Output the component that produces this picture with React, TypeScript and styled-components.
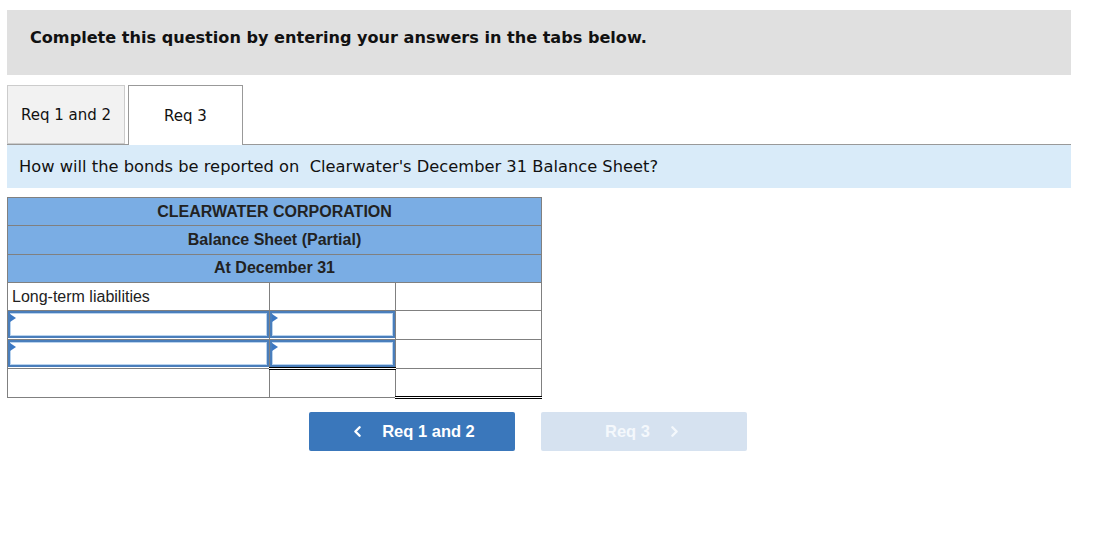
import styled, { createGlobalStyle } from "styled-components";
import { ChevronLeft, ChevronRight } from "lucide-react";

const GlobalStyle = createGlobalStyle`
  body {
    margin: 0;
    background: #fff;
    font-family: "DejaVu Sans", Verdana, sans-serif;
  }
`;

interface activeProps {
  active?: boolean;
}

const tabs = ["Req 1 and 2", "Req 3"];

export default function App() {
  return (
    <>
      <GlobalStyle />
      <Page>
        <Instructions>
          Complete this question by entering your answers in the tabs below.
        </Instructions>
        <TabBar>
          {tabs.map((tab) => (
            <Tab key={tab} active={tab === "Req 3"}>
              {tab}
            </Tab>
          ))}
        </TabBar>
        <Prompt>
          How will the bonds be reported on&nbsp; Clearwater's December 31 Balance Sheet?
        </Prompt>
        <Sheet>
          <colgroup>
            <col style={{ width: 262 }} />
            <col style={{ width: 126 }} />
            <col style={{ width: 146 }} />
          </colgroup>
          <tbody>
            <tr>
              <HeadCell colSpan={3}>CLEARWATER CORPORATION</HeadCell>
            </tr>
            <tr>
              <HeadCell colSpan={3}>Balance Sheet (Partial)</HeadCell>
            </tr>
            <tr>
              <HeadCell colSpan={3}>At December 31</HeadCell>
            </tr>
            <tr>
              <Cell>Long-term liabilities</Cell>
              <Cell />
              <Cell />
            </tr>
            <tr>
              <Cell>
                <InputBox />
              </Cell>
              <Cell>
                <InputBox />
              </Cell>
              <Cell />
            </tr>
            <tr>
              <Cell>
                <InputBox />
              </Cell>
              <Cell total>
                <InputBox />
              </Cell>
              <Cell />
            </tr>
            <tr>
              <Cell />
              <Cell />
              <Cell total />
            </tr>
          </tbody>
        </Sheet>
        <NavRow>
          <NavButton>
            <ChevronLeft size={17} strokeWidth={3.4} />
            <span>Req 1 and 2</span>
          </NavButton>
          <NavButton disabled>
            <span>Req 3</span>
            <ChevronRight size={17} strokeWidth={3.4} />
          </NavButton>
        </NavRow>
      </Page>
    </>
  );
}

const Page = styled.div`
  padding: 10px 31px 40px 7px;
`;

const Instructions = styled.div`
  box-sizing: border-box;
  background: #e0e0e0;
  height: 65px;
  display: flex;
  align-items: center;
  padding: 0 0 10px 23px;
  font-weight: bold;
  font-size: 16.1px;
  color: #111;
`;

const TabBar = styled.div`
  margin-top: 10px;
  display: flex;
  gap: 3px;
  border-bottom: 1px solid #999;
  height: 59px;
`;

const Tab = styled.div<activeProps>`
  box-sizing: border-box;
  height: ${(props) => (props.active ? "60px" : "59px")};
  width: ${(props) => (props.active ? "115px" : "118px")};
  display: flex;
  align-items: center;
  justify-content: center;
  font-size: 15px;
  color: #111;
  background: ${(props) => (props.active ? "#fff" : "#f2f2f2")};
  border: 1px solid ${(props) => (props.active ? "#999" : "#ccc")};
  border-bottom: ${(props) => (props.active ? "none" : "1px solid #ccc")};
  padding-top: ${(props) => (props.active ? "0" : "1px")};
`;

const Prompt = styled.div`
  background: #d9ebf9;
  height: 43px;
  display: flex;
  align-items: center;
  padding-left: 12px;
  font-size: 16.3px;
  color: #111;
`;

const Sheet = styled.table`
  margin-top: 9px;
  width: 534px;
  border-collapse: collapse;
  table-layout: fixed;
  border: 1px solid #808080;
  font-family: "Liberation Sans", Arial, sans-serif;
  font-size: 16px;
  line-height: 18px;
  color: #222;
`;

const HeadCell = styled.td`
  background: #7aade4;
  height: 27.4px;
  padding: 0;
  text-align: center;
  font-weight: bold;
  border: 1px solid #808080;
`;

const Cell = styled.td<{ total?: boolean }>`
  height: 27.2px;
  padding: 0;
  border: 1px solid #808080;
  border-bottom: ${(props) =>
    props.total ? "3px double #000" : "1px solid #808080"};
  padding-left: 4px;
  vertical-align: middle;

  &:has(> div) {
    padding: 0;
  }
`;

const InputBox = styled.div`
  position: relative;
  box-sizing: border-box;
  height: 27px;
  border: 2px solid #4a7ebb;
  box-shadow: inset 0 0 0 1px #b9d3ee;
  background: #fff;

  &::before {
    content: "";
    position: absolute;
    top: 1px;
    left: 0;
    border-top: 4px solid transparent;
    border-bottom: 4px solid transparent;
    border-left: 6px solid #3c78c3;
  }
`;

const NavRow = styled.div`
  margin-top: 13px;
  margin-left: 302px;
  display: flex;
  gap: 26px;
`;

const NavButton = styled.button`
  width: 206px;
  height: 39px;
  border: none;
  border-radius: 2px;
  display: flex;
  align-items: center;
  justify-content: center;
  gap: 16px;
  background: #3a77bb;
  color: #fff;
  font-family: "Liberation Sans", Arial, sans-serif;
  font-weight: bold;
  font-size: 16.5px;
  cursor: pointer;

  &:disabled {
    background: #d6e2f0;
    color: #f4f8fc;
    cursor: default;
  }
`;
